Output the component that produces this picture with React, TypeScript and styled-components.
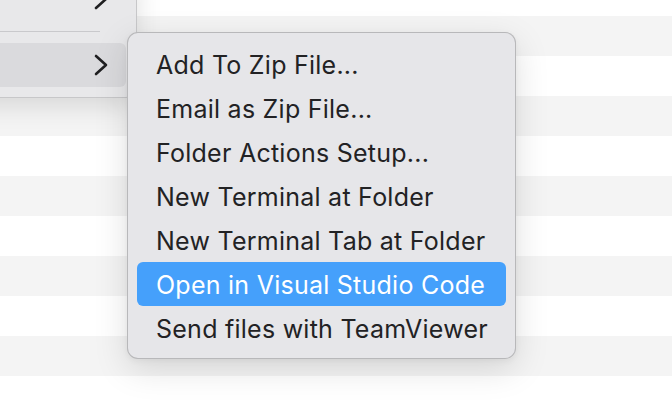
import React from "react";
import styled, { createGlobalStyle } from "styled-components";

const Global = createGlobalStyle`
  html, body { margin: 0; padding: 0; background: #ffffff; }
  body { width: 672px; height: 416px; overflow: hidden; font-family: Inter, "Noto Sans", "Liberation Sans", sans-serif; }
  #root { width: 672px; height: 416px; }
`;

const Page = styled.div`
  position: relative;
  width: 672px;
  height: 416px;
  overflow: hidden;
  background: #ffffff;
`;

const Stripes = styled.div`
  display: flex;
  flex-direction: column;
  padding-top: 16px;
`;

const Stripe = styled.div<{ $shade: boolean }>`
  height: 40px;
  flex: none;
  background: ${(p) => (p.$shade ? "#f4f4f4" : "#ffffff")};
`;

const ParentMenu = styled.div`
  position: absolute;
  left: -120px;
  top: -34px;
  width: 257px;
  box-sizing: border-box;
  padding: 10px 10px 10px 10px;
  background: #e8e8ea;
  border: 1px solid rgba(0, 0, 0, 0.14);
  border-radius: 11px;
  box-shadow: 0 8px 26px rgba(0, 0, 0, 0.12);
  display: flex;
  flex-direction: column;
`;

const ParentRow = styled.div<{ $active?: boolean }>`
  height: 44px;
  display: flex;
  align-items: center;
  justify-content: flex-end;
  padding-right: 18px;
  border-radius: 6px;
  background: ${(p) => (p.$active ? "#dadadd" : "transparent")};
`;

const Separator = styled.div`
  height: 1px;
  margin: 10px 26px 11px 0;
  background: #c9c9cc;
`;

const SubMenu = styled.div`
  position: absolute;
  left: 127px;
  top: 32px;
  width: 389px;
  box-sizing: border-box;
  padding: 9px 9px 8px;
  background: #e6e6e9;
  border: 1px solid rgba(0, 0, 0, 0.2);
  border-radius: 11px;
  box-shadow: 0 10px 34px rgba(0, 0, 0, 0.13), 0 2px 6px rgba(0, 0, 0, 0.05);
  display: flex;
  flex-direction: column;
`;

const Item = styled.div<{ $active?: boolean }>`
  height: 44px;
  display: flex;
  align-items: center;
  padding-left: 19px;
  padding-top: 2px;
  box-sizing: border-box;
  border-radius: 6px;
  font-size: 25px;
  letter-spacing: 0.25px;
  color: ${(p) => (p.$active ? "#ffffff" : "#222224")};
  background: ${(p) => (p.$active ? "#45a0fb" : "transparent")};
  white-space: nowrap;
`;

const Chevron = () => (
  <svg width="14" height="22" viewBox="0 0 14 22" fill="none">
    <polyline
      points="2,2 12,11 2,20"
      stroke="#1f1f21"
      strokeWidth="2.6"
      strokeLinecap="round"
      strokeLinejoin="round"
    />
  </svg>
);

const items = [
  "Add To Zip File...",
  "Email as Zip File...",
  "Folder Actions Setup...",
  "New Terminal at Folder",
  "New Terminal Tab at Folder",
  "Open in Visual Studio Code",
  "Send files with TeamViewer",
];

export default function App() {
  return (
    <Page>
      <Global />
      <Stripes>
        {Array.from({ length: 10 }).map((_, i) => (
          <Stripe key={i} $shade={i % 2 === 0} />
        ))}
      </Stripes>
      <ParentMenu>
        <ParentRow>
          <Chevron />
        </ParentRow>
        <Separator />
        <ParentRow $active>
          <Chevron />
        </ParentRow>
      </ParentMenu>
      <SubMenu>
        {items.map((t, i) => (
          <Item key={t} $active={i === 5}>
            {t}
          </Item>
        ))}
      </SubMenu>
    </Page>
  );
}
